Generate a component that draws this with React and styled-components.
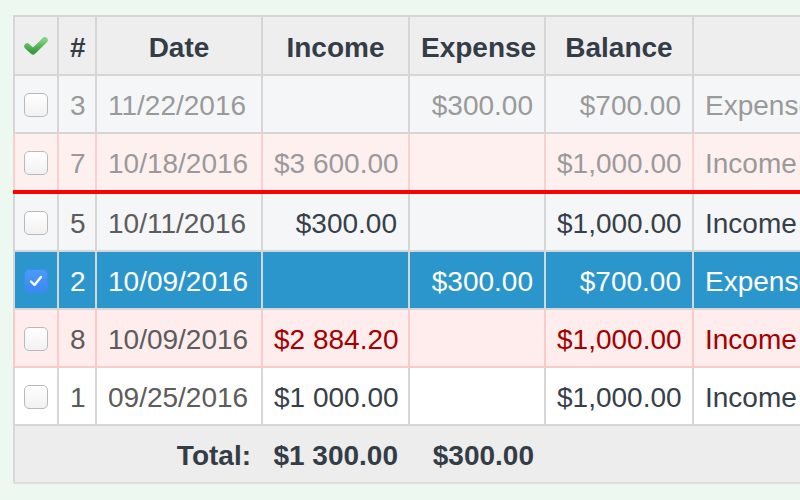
import React from "react";
import styled, { createGlobalStyle, css } from "styled-components";

const Global = createGlobalStyle`
  html, body { margin: 0; padding: 0; }
  body {
    background: #edf8f1;
    font-family: "Liberation Sans", Arial, sans-serif;
    overflow: hidden;
    width: 800px;
    height: 500px;
  }
`;

const Page = styled.div`
  padding: 15px 0 0 13px;
`;

const Table = styled.table`
  border-collapse: collapse;
  table-layout: fixed;
  width: 839px;
  font-size: 28px;
  color: #36404a;
  border: 2px solid #d6d6d6;
`;

const HeadCell = styled.th`
  height: 53px;
  padding: 4px 11px 0;
  background: #eeeeee;
  border: 2px solid #d6d6d6;
  font-weight: bold;
  text-align: center;
  color: #343d46;
  vertical-align: middle;
`;

const tones = {
  faded: css`
    background: #f5f6f8;
    color: #9a9a9a;
  `,
  fadedPink: css`
    background: #fff0f0;
    color: #9a9a9a;
    border-color: #f9cfcf;
  `,
  stripe: css`
    background: #f5f6f8;
  `,
  selected: css`
    background: #2b96cc;
    color: #ffffff;
  `,
  pink: css`
    background: #ffecec;
    border-color: #f9cccc;
  `,
  plain: css`
    background: #ffffff;
  `,
};

const Cell = styled.td`
  height: 52px;
  padding: 4px 11px 0;
  border: 2px solid #d6d6d6;
  vertical-align: middle;
  white-space: nowrap;
  overflow: hidden;
  text-align: ${(p) => p.$align || "left"};
  ${(p) => tones[p.$tone]}
  ${(p) => p.$muted && p.$tone !== "selected" && p.$tone !== "faded" && p.$tone !== "fadedPink" && css`color: #5c5c5c;`}
  ${(p) => p.$alert && css`color: #a30000;`}
  ${(p) => p.$cut && css`border-bottom: 4px solid #ff0000;`}
`;

const FootCell = styled.td`
  height: 52px;
  padding: 4px 11px 0;
  background: #ededed;
  border-top: 2px solid #d6d6d6;
  border-bottom: 2px solid #dedede;
  font-weight: bold;
  color: #343d46;
  text-align: ${(p) => p.$align || "right"};
  vertical-align: middle;
  white-space: nowrap;
`;

const Box = styled.span`
  display: inline-block;
  width: 24px;
  height: 24px;
  box-sizing: border-box;
  border-radius: 5px;
  vertical-align: middle;
  border: 1px solid ${(p) => (p.$checked ? "#3c8cf0" : "#b9b9b9")};
  background: ${(p) =>
    p.$checked
      ? "linear-gradient(#4d9bf7, #3a88f2)"
      : "linear-gradient(#ffffff, #f1f1f1)"};
  position: relative;
  top: 1px;
`;

const CheckCell = styled(Cell)`
  padding: 0;
  height: 56px;
  text-align: center;
  line-height: 0;
`;

const HeadCheck = styled(HeadCell)`
  padding: 0;
  height: 57px;
  line-height: 0;
`;

function Checkbox({ checked }) {
  return (
    <Box $checked={checked}>
      {checked && (
        <svg width="22" height="22" viewBox="0 0 22 22" style={{ display: "block" }}>
          <path
            d="M6 11.5 L9.5 15 L16 7"
            fill="none"
            stroke="#ffffff"
            strokeWidth="2.4"
            strokeLinecap="round"
            strokeLinejoin="round"
          />
        </svg>
      )}
    </Box>
  );
}

function GreenCheck() {
  return (
    <svg width="24" height="20" viewBox="0 0 24 20" style={{ display: "inline-block" }}>
      <defs>
        <linearGradient id="gc" x1="0" y1="0" x2="0" y2="1">
          <stop offset="0" stopColor="#7fd27c" />
          <stop offset="1" stopColor="#3a9a41" />
        </linearGradient>
      </defs>
      <path
        d="M3.2 10.2 L9 15.6 L20.8 4.2"
        fill="none"
        stroke="url(#gc)"
        strokeWidth="6"
        strokeLinecap="round"
        strokeLinejoin="round"
      />
    </svg>
  );
}

const rows = [
  { id: 3, date: "11/22/2016", income: "", expense: "$300.00", balance: "$700.00", type: "Expense", tone: "faded" },
  { id: 7, date: "10/18/2016", income: "$3 600.00", expense: "", balance: "$1,000.00", type: "Income", tone: "fadedPink", cut: true },
  { id: 5, date: "10/11/2016", income: "$300.00", expense: "", balance: "$1,000.00", type: "Income", tone: "stripe" },
  { id: 2, date: "10/09/2016", income: "", expense: "$300.00", balance: "$700.00", type: "Expense", tone: "selected", checked: true },
  { id: 8, date: "10/09/2016", income: "$2 884.20", expense: "", balance: "$1,000.00", type: "Income", tone: "pink", alert: true },
  { id: 1, date: "09/25/2016", income: "$1 000.00", expense: "", balance: "$1,000.00", type: "Income", tone: "plain" },
];

const widths = [44, 38, 166, 147, 136, 148, 160];

export default function App() {
  return (
    <>
      <Global />
      <Page>
        <Table>
          <colgroup>
            {widths.map((w, i) => (
              <col key={i} style={{ width: w }} />
            ))}
          </colgroup>
          <thead>
            <tr>
              <HeadCheck>
                <GreenCheck />
              </HeadCheck>
              <HeadCell>#</HeadCell>
              <HeadCell>Date</HeadCell>
              <HeadCell>Income</HeadCell>
              <HeadCell>Expense</HeadCell>
              <HeadCell>Balance</HeadCell>
              <HeadCell></HeadCell>
            </tr>
          </thead>
          <tbody>
            {rows.map((r) => {
              const common = { $tone: r.tone, $cut: r.cut };
              return (
                <tr key={r.id}>
                  <CheckCell {...common}>
                    <Checkbox checked={r.checked} />
                  </CheckCell>
                  <Cell {...common} $align="center" $muted>{r.id}</Cell>
                  <Cell {...common} $muted>{r.date}</Cell>
                  <Cell {...common} $align="right" $alert={r.alert}>{r.income}</Cell>
                  <Cell {...common} $align="right" $alert={r.alert}>{r.expense}</Cell>
                  <Cell {...common} $align="right" $alert={r.alert}>{r.balance}</Cell>
                  <Cell {...common} $alert={r.alert}>{r.type}</Cell>
                </tr>
              );
            })}
          </tbody>
          <tfoot>
            <tr>
              <FootCell colSpan={3}>Total:</FootCell>
              <FootCell>$1 300.00</FootCell>
              <FootCell>$300.00</FootCell>
              <FootCell colSpan={2}></FootCell>
            </tr>
          </tfoot>
        </Table>
      </Page>
    </>
  );
}
